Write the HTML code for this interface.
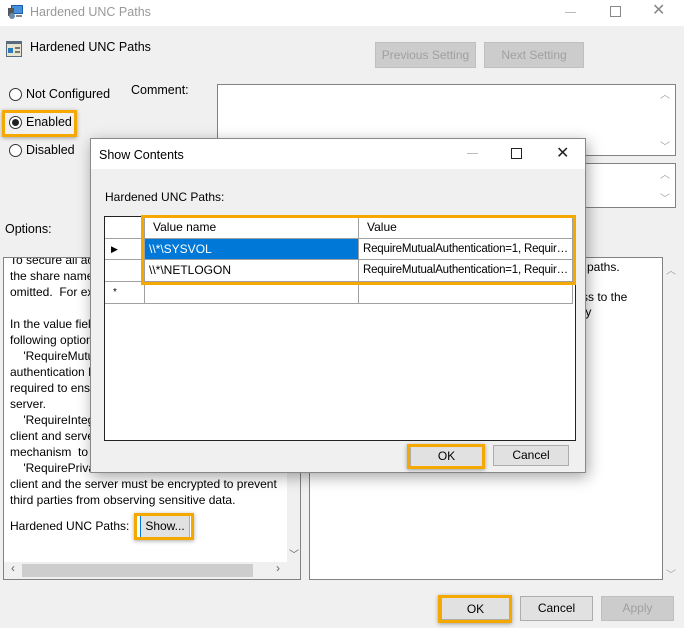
<!DOCTYPE html>
<html><head><meta charset="utf-8"><style>
*{margin:0;padding:0;box-sizing:border-box}
body{width:684px;height:628px;overflow:hidden;background:#f0f0f0;font-family:"Liberation Sans",sans-serif;font-size:12px;color:#000;position:relative}
.a{position:absolute;white-space:nowrap}
.btn{position:absolute;background:#e1e1e1;border:1px solid #adadad;text-align:center;line-height:22px}
.dis{background:#cccccc;border-color:#bfbfbf;color:#a0a0a0}
.hl{position:absolute;border:3px solid #f5a800;box-shadow:0 1px 4px rgba(0,0,0,.35)}
.box{position:absolute;background:#fff;border:1px solid #828282}
.radio{position:absolute;width:13px;height:13px;border:1px solid #333;border-radius:50%;background:#fff}
.sb{position:absolute;color:#a0a0a0;font-size:10px}
.cell{position:absolute;border-right:1px solid #a0a0a0;border-bottom:1px solid #a0a0a0;padding-left:4px;line-height:21px;overflow:hidden;white-space:nowrap;text-overflow:ellipsis}
.v{font-size:11.5px;letter-spacing:-0.2px}
</style></head><body>
<div class="a" style="left:0;top:0;width:684px;height:26px;background:#fff"></div>
<svg class="a" style="left:8px;top:4px" width="16" height="16"><rect x="3" y="1" width="12" height="9" fill="#1a5fb4"/><rect x="4" y="2" width="10" height="7" fill="#4a90d9"/><rect x="0" y="4" width="6" height="8" fill="#555"/><circle cx="4" cy="12" r="3" fill="#6a8bb0"/><rect x="8" y="11" width="6" height="2" fill="#888"/></svg>
<div class="a" style="left:30px;top:5px;color:#999;font-size:12.5px">Hardened UNC Paths</div>
<div class="a" style="left:565px;top:12px;width:11px;height:1px;background:#bbb"></div>
<div class="a" style="left:610px;top:6px;width:11px;height:11px;border:1px solid #888"></div>
<div class="a" style="left:652px;top:0px;color:#888;font-size:16px">✕</div>
<svg class="a" style="left:6px;top:41px" width="16" height="16"><rect x="0" y="0" width="16" height="16" fill="#5a6b7d"/><rect x="1" y="3" width="14" height="12" fill="#e8e4d0"/><rect x="2" y="7" width="5" height="5" fill="#2a7ac0"/><rect x="9" y="6" width="5" height="2" fill="#777"/><rect x="9" y="10" width="5" height="2" fill="#777"/></svg>
<div class="a" style="left:30px;top:40px;font-size:12.5px">Hardened UNC Paths</div>
<div class="btn dis" style="left:375px;top:42px;width:101px;height:26px;line-height:24px">Previous Setting</div>
<div class="btn dis" style="left:484px;top:42px;width:100px;height:26px;line-height:24px">Next Setting</div>
<div class="radio" style="left:9px;top:88px"></div><div class="a" style="left:26px;top:87px;font-size:12.5px">Not Configured</div>
<div class="radio" style="left:9px;top:116px"></div><div class="a" style="left:12px;top:119px;width:7px;height:7px;border-radius:50%;background:#222"></div><div class="a" style="left:26px;top:115px;font-size:12.5px">Enabled</div>
<div class="hl" style="left:2px;top:110px;width:75px;height:27px"></div>
<div class="radio" style="left:9px;top:144px"></div><div class="a" style="left:26px;top:143px;font-size:12.5px">Disabled</div>
<div class="a" style="left:131px;top:83px;font-size:12.5px">Comment:</div>
<div class="box" style="left:217px;top:84px;width:459px;height:72px"></div>
<div class="sb" style="left:660px;top:86px">︿</div><div class="sb" style="left:660px;top:138px">﹀</div>
<div class="box" style="left:217px;top:163px;width:459px;height:45px"></div>
<div class="sb" style="left:660px;top:166px">︿</div><div class="sb" style="left:660px;top:190px">﹀</div>
<div class="a" style="left:5px;top:222px;font-size:12.5px">Options:</div>
<div class="box" style="left:3px;top:257px;width:298px;height:323px;overflow:hidden">
<div style="position:absolute;left:6px;top:-6px;line-height:16px;font-size:12px">To secure all access to shares<br>the share name<br>omitted.&nbsp; For ex<br><br>In the value field<br>following option<br>&nbsp;&nbsp;&nbsp;&nbsp;'RequireMutual<br>authentication I<br>required to ensu<br>server.<br>&nbsp;&nbsp;&nbsp;&nbsp;'RequireIntegr<br>client and serve<br>mechanism&nbsp; to<br>&nbsp;&nbsp;&nbsp;&nbsp;'RequirePriva<br>client and the server must be encrypted to prevent<br>third parties from observing sensitive data.</div>
<div class="a" style="left:6px;top:261px;font-size:12px">Hardened UNC Paths:</div>
<div class="btn" style="left:136px;top:257px;width:50px;height:23px;line-height:21px;border-left:1px solid #0078d7">Show...</div>
<div class="a" style="left:0;top:304px;width:298px;height:17px;background:#f0f0f0"></div>
<div class="a" style="left:18px;top:306px;width:231px;height:13px;background:#cdcdcd"></div>
<div class="a" style="left:7px;top:303px;color:#606060">‹</div><div class="a" style="left:272px;top:303px;color:#606060">›</div>
<div class="a" style="left:283px;top:0;width:15px;height:304px;background:#f0f0f0"></div>
<div class="sb" style="left:285px;top:288px;color:#606060">﹀</div>
</div>
<div class="hl" style="left:134px;top:513px;width:60px;height:27px"></div>
<div class="box" style="left:309px;top:257px;width:354px;height:323px"></div>
<div class="a" style="left:587px;top:260px;font-size:12px">paths.</div>
<div class="a" style="left:582px;top:290px;font-size:12px">ss to the</div>
<div class="a" style="left:582px;top:305px;font-size:12px">ty</div>
<div class="sb" style="left:666px;top:262px">︿</div><div class="sb" style="left:666px;top:566px">﹀</div>
<div class="btn" style="left:441px;top:597px;width:69px;height:23px">OK</div>
<div class="hl" style="left:438px;top:595px;width:74px;height:28px"></div>
<div class="btn" style="left:520px;top:596px;width:73px;height:25px">Cancel</div>
<div class="btn dis" style="left:601px;top:596px;width:73px;height:25px">Apply</div>
<div class="a" style="left:90px;top:138px;width:496px;height:335px;background:#f0f0f0;border:1px solid #888;box-shadow:2px 4px 14px rgba(0,0,0,.35)">
<div class="a" style="left:0;top:0;width:494px;height:30px;background:#fff"></div>
<div class="a" style="left:8px;top:9px;font-size:12.5px">Show Contents</div>
<div class="a" style="left:376px;top:14px;width:11px;height:1px;background:#bbb"></div>
<div class="a" style="left:420px;top:9px;width:11px;height:11px;border:1px solid #222"></div>
<div class="a" style="left:465px;top:4px;font-size:16px;color:#222">✕</div>
<div class="a" style="left:14px;top:51px;font-size:12px">Hardened UNC Paths:</div>
<div class="a" style="left:13px;top:77px;width:472px;height:225px;background:#fff;border:1px solid #222">
<div class="cell" style="left:0;top:0;width:40px;height:22px"></div>
<div class="cell" style="left:40px;top:0;width:214px;height:22px;padding-left:8px">Value name</div>
<div class="cell" style="left:254px;top:0;width:214px;height:22px;padding-left:8px">Value</div>
<div class="cell" style="left:0;top:22px;width:40px;height:21px;font-size:9px;padding-left:6px">▶</div>
<div class="cell" style="left:40px;top:22px;width:214px;height:21px;background:#0078d7;color:#fff">\\*\SYSVOL</div>
<div class="cell v" style="left:254px;top:22px;width:214px;height:21px">RequireMutualAuthentication=1, RequireIntegrity=1</div>
<div class="cell" style="left:0;top:43px;width:40px;height:22px"></div>
<div class="cell" style="left:40px;top:43px;width:214px;height:22px">\\*\NETLOGON</div>
<div class="cell v" style="left:254px;top:43px;width:214px;height:22px">RequireMutualAuthentication=1, RequireIntegrity=1</div>
<div class="cell" style="left:0;top:65px;width:40px;height:22px;font-size:10px;padding-left:8px">*</div>
<div class="cell" style="left:40px;top:65px;width:214px;height:22px"></div>
<div class="cell" style="left:254px;top:65px;width:214px;height:22px"></div>
</div>
<div class="hl" style="left:50px;top:76px;width:435px;height:70px;box-shadow:none"></div>
<div class="btn" style="left:319px;top:307px;width:73px;height:21px;line-height:19px">OK</div>
<div class="hl" style="left:316px;top:305px;width:78px;height:25px"></div>
<div class="btn" style="left:402px;top:306px;width:76px;height:21px;line-height:19px">Cancel</div>
</div>
</body></html>
